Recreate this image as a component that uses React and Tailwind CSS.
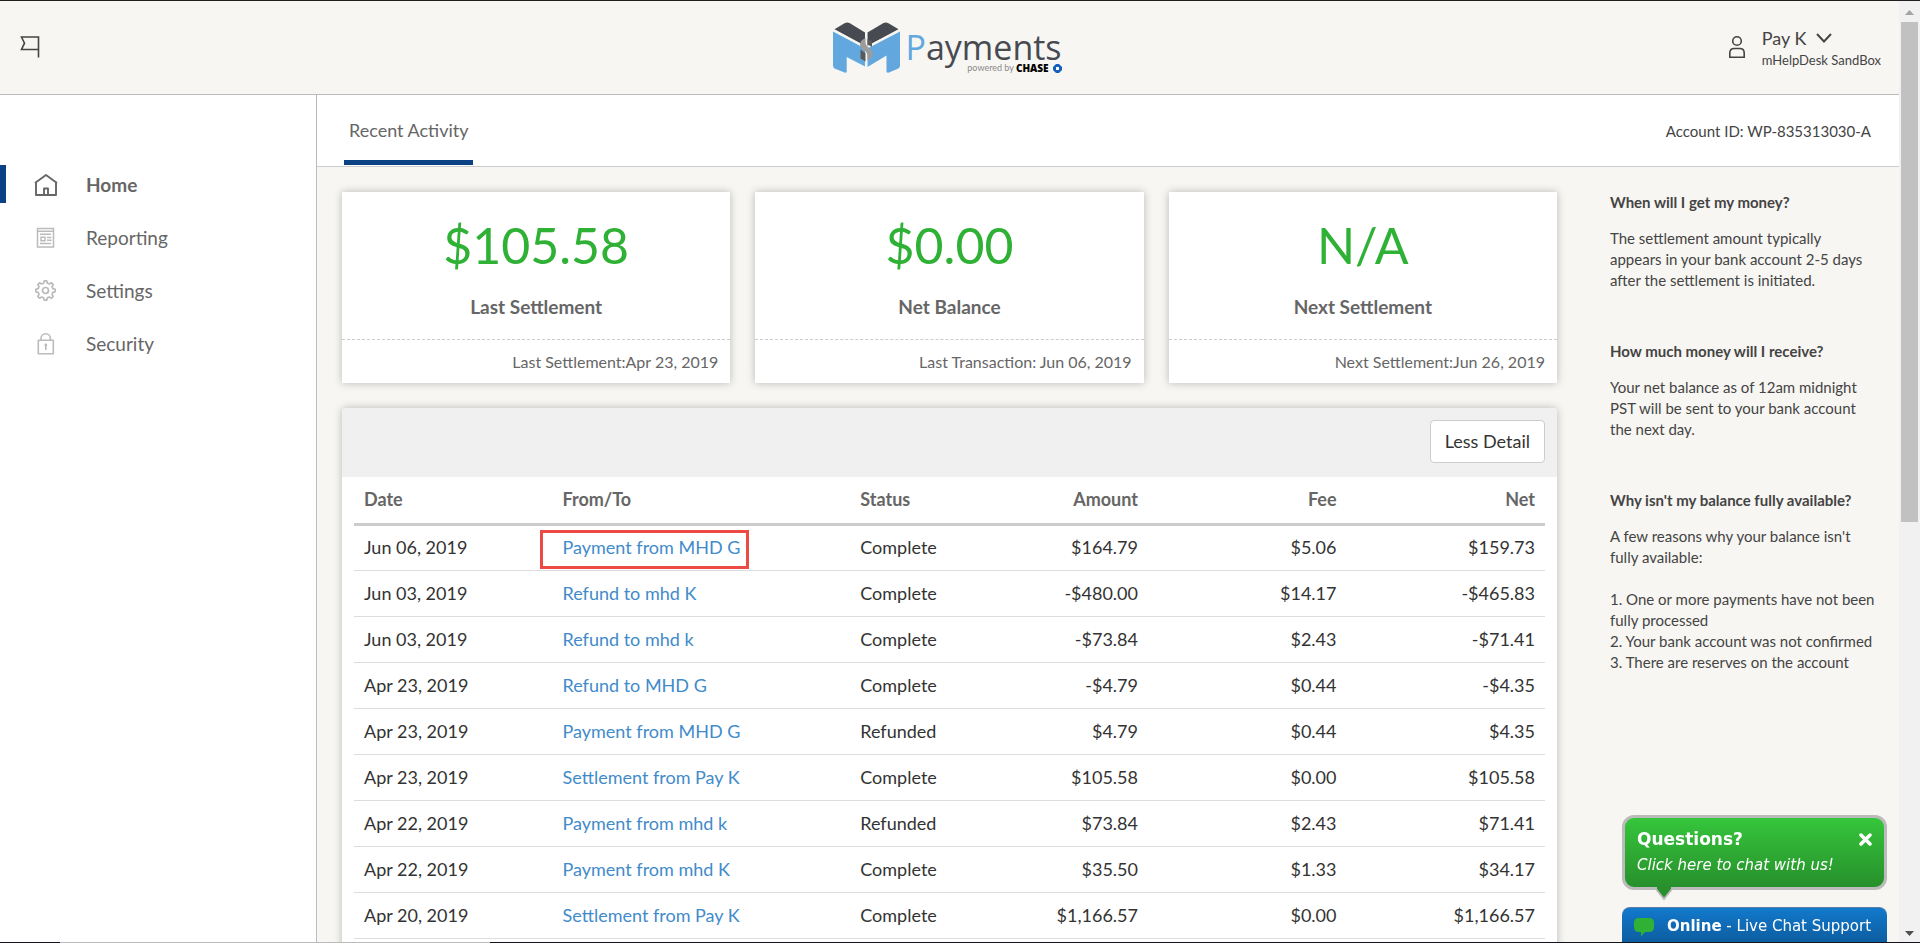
import React, { useState } from 'react';

const FONT = "font-['Lato','Open_Sans',sans-serif]";

const NAV = [
  { label: 'Home', icon: HomeIcon },
  { label: 'Reporting', icon: ReportIcon },
  { label: 'Settings', icon: GearIcon },
  { label: 'Security', icon: LockIcon },
];

const CARDS = [
  { value: '$105.58', title: 'Last Settlement', note: 'Last Settlement:Apr 23, 2019' },
  { value: '$0.00', title: 'Net Balance', note: 'Last Transaction: Jun 06, 2019' },
  { value: 'N/A', title: 'Next Settlement', note: 'Next Settlement:Jun 26, 2019' },
];

const ROWS = [
  ['Jun 06, 2019', 'Payment from MHD G', 'Complete', '$164.79', '$5.06', '$159.73'],
  ['Jun 03, 2019', 'Refund to mhd K', 'Complete', '-$480.00', '$14.17', '-$465.83'],
  ['Jun 03, 2019', 'Refund to mhd k', 'Complete', '-$73.84', '$2.43', '-$71.41'],
  ['Apr 23, 2019', 'Refund to MHD G', 'Complete', '-$4.79', '$0.44', '-$4.35'],
  ['Apr 23, 2019', 'Payment from MHD G', 'Refunded', '$4.79', '$0.44', '$4.35'],
  ['Apr 23, 2019', 'Settlement from Pay K', 'Complete', '$105.58', '$0.00', '$105.58'],
  ['Apr 22, 2019', 'Payment from mhd k', 'Refunded', '$73.84', '$2.43', '$71.41'],
  ['Apr 22, 2019', 'Payment from mhd K', 'Complete', '$35.50', '$1.33', '$34.17'],
  ['Apr 20, 2019', 'Settlement from Pay K', 'Complete', '$1,166.57', '$0.00', '$1,166.57'],
];

function HomeIcon() {
  return (
    <svg width="24" height="24" viewBox="0 0 24 24" fill="none" stroke="#666" strokeWidth="1.9" strokeLinejoin="round">
      <path d="M1 10 12 2l11 8" />
      <path d="M2 9.5V22h20V9.5" />
      <path d="M10 22v-6.500h4V22" />
    </svg>
  );
}

function ReportIcon() {
  return (
    <svg width="24" height="24" viewBox="0 0 24 24" fill="none" stroke="#bbb" strokeWidth="1.5">
      <path d="M3.500 2.500h16v18.500h-16z" />
      <path d="M3.500 5.200h16M6 8.200h11M13 11.500h4.500M13 14.300h4.500M6 17.500h11" />
      <path d="M7 11.200h4v3.600H7z" />
    </svg>
  );
}

function GearIcon() {
  return (
    <svg width="24" height="24" viewBox="0 0 24 24" fill="none" stroke="#bbb" strokeWidth="1.700" strokeLinejoin="round">
      <path d="M9.600 4.200 10.300 1.800h2.400l.7 2.400 1.900.8 2.200-1.200 1.700 1.700-1.200 2.200.8 1.900 2.400.7v2.400l-2.400.7-.8 1.900 1.200 2.200-1.700 1.700-2.200-1.200-1.900.8-.7 2.400h-2.400l-.7-2.400-1.900-.8-2.200 1.200-1.700-1.700L5 15.300l-.8-1.900-2.400-.7v-2.400l2.400-.7.8-1.900-1.200-2.200 1.700-1.700L7.700 5z" />
      <circle cx="11.500" cy="11.500" r="3" />
    </svg>
  );
}

function LockIcon() {
  return (
    <svg width="24" height="24" viewBox="0 0 24 24" fill="none" stroke="#bbb" strokeWidth="1.600" strokeLinejoin="round">
      <path d="M4.300 8.300h15v13.500h-15z" />
      <path d="M7 8.300V6.500a4.700 4.700 0 0 1 9.400 0v1.800" />
      <circle cx="11.800" cy="13" r="1.400" fill="#bbb" stroke="none" />
      <path d="M11.800 13v5" />
    </svg>
  );
}

function Logo() {
  return (
    <a href="#home" className="flex items-start" aria-label="Payments powered by Chase">
      <svg width="68" height="52" viewBox="0 0 68 52">
        <path d="M0 9.500 32 26.500V44.500L13.700 35V50Q13 51 11.500 50.500L1.500 46.500Q0 45.500 0 43.500Z" fill="#62a8df" />
        <path d="M67 9.500 34.500 26.500V45L53.500 33.500V50Q54.500 51 56 50.500L65.500 46.500Q67 45.500 67 43.500Z" fill="#62a8df" />
        <path d="M1.500 7.200 11.500 1.200Q14 0 16.500 1L32 10.500V24Z" fill="#474b51" />
        <path d="M65.500 7.200 55.500 1.200Q53 0 50.500 1L34.500 10.500V24Z" fill="#474b51" />
        <path d="M.5 8 32.500 25M66.500 8 34 25" stroke="#f7f6f2" strokeWidth="1.500" />
        <path d="M33.300 9v38" stroke="#f7f6f2" strokeWidth="1.600" />
        <path d="M27.500 27.500 32.500 31v8.500l-5-3z" fill="#5a5a5a" />
        <path d="M34.500 17l4.500 2v6l-4.500-2.500z" fill="#5a5a5a" />
        <path d="M32.500 16Q27.500 18 27 22Q27 26 32 29Q34.500 31 34.500 33.500V38.500Q39.500 36 39.500 31.500Q39.500 28 35 25Q32.500 23 32.500 21Z" fill="#9c9c9c" />
      </svg>
      <span className="flex flex-col items-end">
        <span className="pt-[9px] pl-1 font-['Open_Sans','Lato',sans-serif] text-[34px] leading-[32px] text-[#474b51]">
          <span className="text-[#62a8df]">P</span>ayments
        </span>
        <span className="flex items-center gap-[2px] text-[9px] leading-[10px] text-[#8a8a8a]">
          <span>powered by</span>
          <b className="font-['Open_Sans',sans-serif] text-[10px] font-extrabold text-black">CHASE</b>
          <svg className="ml-[2px]" width="9" height="9" viewBox="0 0 9 9">
            <path d="M3 0h3l3 3v3L6 9H3L0 6V3z" fill="#1560bd" />
            <path d="M3 3h3v3H3z" fill="#fff" />
          </svg>
        </span>
      </span>
    </a>
  );
}

function Header() {
  return (
    <header className="grid h-[95px] grid-cols-[1fr_auto_1fr] border-t border-b border-t-[#231f20] border-b-[#bbb] bg-[#f7f6f2]">
      <button type="button" aria-label="Flag" className="mt-8 ml-5 h-6 w-6 justify-self-start">
        <svg width="24" height="26" viewBox="0 0 24 26" fill="none" stroke="#444" strokeWidth="1.600">
          <path d="M18.500 24.500V4H1.500l3 6.200-3 6.300h17" />
        </svg>
      </button>
      <div className="pt-[21px] pr-1">
        <Logo />
      </div>
      <div className="mt-6 mr-[18px] flex gap-4 justify-self-end text-[#444]">
        <svg className="mt-[10px]" width="18" height="24" viewBox="0 0 18 24" fill="none" stroke="#444" strokeWidth="1.600">
          <circle cx="9" cy="6" r="4.300" />
          <path d="M1.800 22.200h14.400V18q0-4.500-4.500-4.500H6.300Q1.800 13.500 1.800 18z" />
        </svg>
        <button type="button" className="flex flex-col items-start text-left">
          <span className="flex items-center gap-[10px] text-[18px] leading-[26px]">
            Pay K
            <svg width="16" height="10" viewBox="0 0 16 10" fill="none" stroke="#444" strokeWidth="1.900">
              <path d="m1 1 7 7.500L15 1" />
            </svg>
          </span>
          <span className="text-[13px] leading-[18px]">mHelpDesk SandBox</span>
        </button>
      </div>
    </header>
  );
}

function Sidebar() {
  return (
    <nav className="w-[317px] shrink-0 border-r border-[#bbb] bg-white pt-[70px]">
      <ul className="flex flex-col gap-[15px]">
        {NAV.map(({ label, icon: Icon }, i) => (
          <li key={label}>
            <a
              href={`#${label.toLowerCase()}`}
              className={`flex h-[38px] items-center gap-7 border-l-[6px] pt-[2px] pl-7 text-[19px] text-[#666] ${
                i === 0 ? 'border-[#0b4185] font-bold' : 'border-transparent'
              }`}
            >
              <Icon />
              {label}
            </a>
          </li>
        ))}
      </ul>
    </nav>
  );
}

function SummaryCard({ value, title, note }) {
  return (
    <section className="bg-white text-center text-[#666] shadow-[0_0_8px_rgba(0,0,0,0.25)]">
      <div className="h-[148px] border-b border-dashed border-[#ccc] pt-[23px]">
        <p className="text-[50px] leading-[60px] text-[#2fb135]">{value}</p>
        <h2 className="mt-[19px] text-[19px] leading-[26px] font-bold">{title}</h2>
      </div>
      <p className="h-[43px] px-3 text-right text-[16px] leading-[44px]">{note}</p>
    </section>
  );
}

function ActivityTable() {
  const [detail, setDetail] = useState(true);
  return (
    <section className="mt-[25px] rounded-t bg-white shadow-[0_0_8px_rgba(0,0,0,0.25)]">
      <div className="flex h-[69px] items-start justify-end rounded-t bg-[#f0f0f0] px-3 pt-3">
        <button
          type="button"
          onClick={() => setDetail(!detail)}
          className="h-[43px] rounded border border-[#ccc] bg-white px-[14px] text-[18px] text-[#333]"
        >
          {detail ? 'Less Detail' : 'More Detail'}
        </button>
      </div>
      <div className="px-3">
        <table className="w-full table-fixed text-left text-[18px] text-[#333]">
          <thead className="text-[#666]">
            <tr className="h-[47px] border-b-[3px] border-[#ccc]">
              <th className="w-1/6 px-[10px]">Date</th>
              <th className="w-1/4 px-[10px]">From/To</th>
              <th className="w-1/8 px-[10px]">Status</th>
              <th className="w-1/8 px-[10px] text-right">Amount</th>
              <th className="w-1/6 px-[10px] text-right">Fee</th>
              <th className="w-1/6 px-[10px] text-right">Net</th>
            </tr>
          </thead>
          <tbody>
            {ROWS.map(([date, party, status, amount, fee, net], i) => (
              <tr key={i} className="h-[46px] border-b border-[#ddd]">
                <td className="px-[10px]">{date}</td>
                <td className="relative px-[10px]">
                  <a href="#payment" className="text-[#428bca]">{party}</a>
                  {i === 0 && (
                    <span className="absolute top-1 -left-[13px] h-[39px] w-[209px] border-[3px] border-[#ec4a44]" />
                  )}
                </td>
                <td className="px-[10px]">{status}</td>
                <td className="px-[10px] text-right">{amount}</td>
                <td className="px-[10px] text-right">{fee}</td>
                <td className="px-[10px] text-right">{net}</td>
              </tr>
            ))}
          </tbody>
        </table>
        <div className="h-12" />
      </div>
    </section>
  );
}

function Faq() {
  return (
    <aside className="w-[289px] shrink-0 text-[15px] leading-[21px] text-[#444]">
      <h3 className="font-bold">When will I get my money?</h3>
      <p className="mt-[15px] mb-[50px]">
        The settlement amount typically<br />appears in your bank account 2-5 days<br />after the settlement is initiated.
      </p>
      <h3 className="font-bold">How much money will I receive?</h3>
      <p className="mt-[15px] mb-[50px]">
        Your net balance as of 12am midnight<br />PST will be sent to your bank account<br />the next day.
      </p>
      <h3 className="font-bold">Why isn't my balance fully available?</h3>
      <p className="mt-[15px] mb-[21px]">
        A few reasons why your balance isn't<br />fully available:
      </p>
      <p>
        1. One or more payments have not been<br />fully processed<br />
        2. Your bank account was not confirmed<br />
        3. There are reserves on the account
      </p>
    </aside>
  );
}

function ChatWidget() {
  return (
    <div className="fixed right-[33px] bottom-0 w-[265px] font-['DejaVu_Sans',Verdana,sans-serif] text-white">
      <div className="relative h-[75px] rounded-xl border-[3px] border-[#bbb] bg-linear-to-b from-[#36c63c] to-[#27902b] px-3 pt-[9px]">
        <button type="button" className="block text-left">
          <b className="block text-[17px] leading-[24px]">Questions?</b>
          <i className="block text-[15px] leading-[28px]">Click here to chat with us!</i>
        </button>
        <button type="button" aria-label="Close" className="absolute top-[15px] right-3">
          <svg width="13" height="13" viewBox="0 0 13 13" stroke="#fff" strokeWidth="3.500" strokeLinecap="round">
            <path d="m2 2 9 9M11 2l-9 9" />
          </svg>
        </button>
        <svg className="absolute top-[69px] left-[30px]" width="18" height="14" viewBox="0 0 18 14">
          <path d="M1 2 9 12l8-10" fill="#27902b" stroke="#bbb" strokeWidth="2" />
          <path d="M2 0h14v2H2z" fill="#27902b" />
        </svg>
      </div>
      <button
        type="button"
        className="mt-[17px] flex h-[36px] w-full items-center gap-[13px] rounded-t-lg border-t border-[#5b7ea5] bg-linear-to-b from-[#1279cc] to-[#0d5da0] pt-[2px] pl-3 text-[15px]"
      >
        <svg width="20" height="20" viewBox="0 0 20 20">
          <path d="M5 1h10q5 0 5 5v4q0 5-5 5h-4l-4 4.500V15H5Q0 15 0 10V6q0-5 5-5z" fill="#2fb135" />
        </svg>
        <span><b>Online</b> - Live Chat Support</span>
      </button>
    </div>
  );
}

function ScrollBar() {
  return (
    <div className="flex w-[21px] shrink-0 flex-col items-center border-t border-t-[#231f20] bg-[#f1f1f1] pt-[9px] pb-[7px]">
      <svg width="9" height="5" viewBox="0 0 9 5"><path d="M0 5 4.500 0 9 5z" fill="#a3a3a3" /></svg>
      <div className="mt-[7px] h-[500px] w-[17px] bg-[#c1c1c1]" />
      <svg className="mt-auto" width="9" height="5" viewBox="0 0 9 5"><path d="M0 0 4.500 5 9 0z" fill="#505050" /></svg>
    </div>
  );
}

const App = () => {
  return (
    <div className={`flex h-screen overflow-hidden bg-[#f7f6f2] ${FONT}`}>
      <div className="flex min-w-0 flex-1 flex-col">
        <Header />
        <div className="flex min-h-0 flex-1">
          <Sidebar />
          <main className="min-w-0 flex-1">
            <div className="flex h-[72px] justify-between border-b border-[#ccc] bg-white pr-7 pl-[27px]">
              <a href="#recent" className="h-[70px] border-b-[5px] border-[#0b4185] px-[5px] pt-[22px] text-[18px] leading-[27px] text-[#666]">
                Recent Activity
              </a>
              <span className="pt-6 text-[15px] leading-[24px] text-[#444]">Account ID: WP-835313030-A</span>
            </div>
            <div className="flex gap-[53px] pt-[25px] pl-[25px]">
              <div className="min-w-0 flex-1">
                <div className="grid grid-cols-3 gap-[25px]">
                  {CARDS.map(card => <SummaryCard key={card.title} {...card} />)}
                </div>
                <ActivityTable />
              </div>
              <Faq />
            </div>
          </main>
        </div>
      </div>
      <ScrollBar />
      <ChatWidget />
      {/* Bottom window edge */}
      <div className="fixed inset-x-0 bottom-0 flex h-px bg-[#14141f]">
        <div className="ml-[60px] w-[430px] bg-[#bbb]" />
      </div>
    </div>
  );
};

export default App;
